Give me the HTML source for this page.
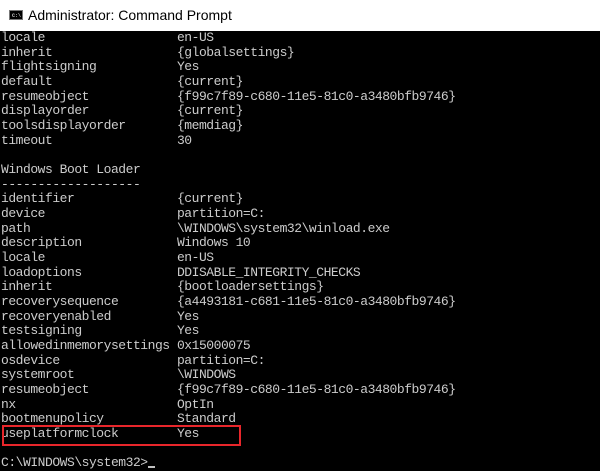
<!DOCTYPE html>
<html><head><style>
html,body{margin:0;padding:0;width:600px;height:470px;overflow:hidden;background:#000;}
.title{position:absolute;left:0;top:0;width:600px;height:31px;background:#fff;z-index:2;}
.title span{position:absolute;left:28px;top:7px;font:14px "Liberation Sans",sans-serif;color:#000;}
.icon{position:absolute;left:9px;top:10px;width:14px;height:10px;background:#000;border:1px solid #777;box-sizing:border-box;}
.icon i{position:absolute;left:2px;top:2px;font:bold 5px "Liberation Mono",monospace;color:#ccc;font-style:normal;}
pre{position:absolute;left:1px;top:31px;margin:0;font:13px/14.67px "Liberation Mono",monospace;letter-spacing:-0.47px;color:#cccccc;}
.box{position:absolute;left:2px;top:425px;width:235px;height:17px;border:2px solid #e8262b;}
.cur{display:inline-block;width:7px;height:2px;background:#c0c0c0;vertical-align:-2px;}
</style></head><body>
<div class="title"><div class="icon"><i>C:\</i></div><span>Administrator: Command Prompt</span></div>
<pre>locale                  en-US
inherit                 {globalsettings}
flightsigning           Yes
default                 {current}
resumeobject            {f99c7f89-c680-11e5-81c0-a3480bfb9746}
displayorder            {current}
toolsdisplayorder       {memdiag}
timeout                 30

Windows Boot Loader
-------------------
identifier              {current}
device                  partition=C:
path                    \WINDOWS\system32\winload.exe
description             Windows 10
locale                  en-US
loadoptions             DDISABLE_INTEGRITY_CHECKS
inherit                 {bootloadersettings}
recoverysequence        {a4493181-c681-11e5-81c0-a3480bfb9746}
recoveryenabled         Yes
testsigning             Yes
allowedinmemorysettings 0x15000075
osdevice                partition=C:
systemroot              \WINDOWS
resumeobject            {f99c7f89-c680-11e5-81c0-a3480bfb9746}
nx                      OptIn
bootmenupolicy          Standard
useplatformclock        Yes

C:\WINDOWS\system32&gt;<span class="cur"></span></pre>
<div class="box"></div>
</body></html>
